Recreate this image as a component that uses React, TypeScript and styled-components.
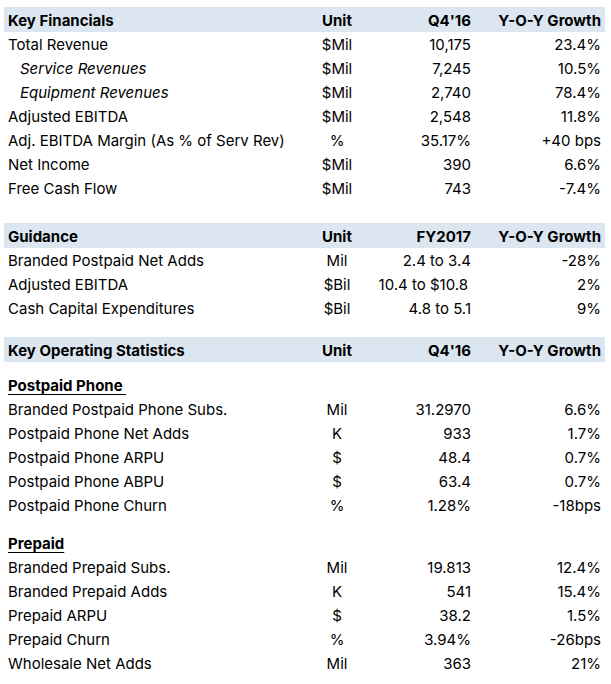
import React from 'react';
import styled, { createGlobalStyle } from 'styled-components';

type Line = {
	label: string;
	unit: string;
	value: string;
	growth: string;
	italic?: boolean;
	valueInset?: number;
};

type Group = { title?: string; lines: Line[] };

type Section = {
	title: string;
	period: string;
	gapBefore: number;
	groups: Group[];
};

const sections: Section[] = [
	{
		title: 'Key Financials',
		period: "Q4'16",
		gapBefore: 7,
		groups: [
			{
				lines: [
					{ label: 'Total Revenue', unit: '$Mil', value: '10,175', growth: '23.4%' },
					{ label: 'Service Revenues', unit: '$Mil', value: '7,245', growth: '10.5%', italic: true },
					{ label: 'Equipment Revenues', unit: '$Mil', value: '2,740', growth: '78.4%', italic: true },
					{ label: 'Adjusted EBITDA', unit: '$Mil', value: '2,548', growth: '11.8%' },
					{ label: 'Adj. EBITDA Margin (As % of Serv Rev)', unit: '%', value: '35.17%', growth: '+40 bps' },
					{ label: 'Net Income', unit: '$Mil', value: '390', growth: '6.6%' },
					{ label: 'Free Cash Flow', unit: '$Mil', value: '743', growth: '-7.4%' },
				],
			},
		],
	},
	{
		title: 'Guidance',
		period: 'FY2017',
		gapBefore: 23,
		groups: [
			{
				lines: [
					{ label: 'Branded Postpaid Net Adds', unit: 'Mil', value: '2.4 to 3.4', growth: '-28%' },
					{ label: 'Adjusted EBITDA', unit: '$Bil', value: '10.4 to $10.8', growth: '2%', valueInset: 3 },
					{ label: 'Cash Capital Expenditures', unit: '$Bil', value: '4.8 to 5.1', growth: '9%' },
				],
			},
		],
	},
	{
		title: 'Key Operating Statistics',
		period: "Q4'16",
		gapBefore: 17,
		groups: [
			{
				title: 'Postpaid Phone ',
				lines: [
					{ label: 'Branded Postpaid Phone Subs.', unit: 'Mil', value: '31.2970', growth: '6.6%' },
					{ label: 'Postpaid Phone Net Adds', unit: 'K', value: '933', growth: '1.7%' },
					{ label: 'Postpaid Phone ARPU', unit: '$', value: '48.4', growth: '0.7%' },
					{ label: 'Postpaid Phone ABPU', unit: '$', value: '63.4', growth: '0.7%' },
					{ label: 'Postpaid Phone Churn', unit: '%', value: '1.28%', growth: '-18bps' },
				],
			},
			{
				title: 'Prepaid',
				lines: [
					{ label: 'Branded Prepaid Subs.', unit: 'Mil', value: '19.813', growth: '12.4%' },
					{ label: 'Branded Prepaid Adds', unit: 'K', value: '541', growth: '15.4%' },
					{ label: 'Prepaid ARPU', unit: '$', value: '38.2', growth: '1.5%' },
					{ label: 'Prepaid Churn', unit: '%', value: '3.94%', growth: '-26bps' },
					{ label: 'Wholesale Net Adds', unit: 'Mil', value: '363', growth: '21%' },
				],
			},
		],
	},
];

const GlobalStyle = createGlobalStyle`
	body {
		margin: 0;
		background: #ffffff;
		font-family: Inter, 'Noto Sans', sans-serif;
		font-size: 15px;
		color: #000000;
	}
`;

const Sheet = styled.div`
	display: flex;
	flex-direction: column;
	width: 601px;
	padding-left: 4px;
`;

const Block = styled.section<{ $gap: number }>`
	display: flex;
	flex-direction: column;
	margin-top: ${(p) => p.$gap}px;
`;

/* hauteur fixe, texte descendu d'un pixel comme dans la feuille */
const Row = styled.div`
	display: grid;
	grid-template-columns: 301px 64px 106px 130px;
	height: 24px;
	line-height: 26px;
	white-space: pre;
`;

const HeadRow = styled(Row)`
	height: 25px;
	line-height: 28px;
	background: #dce6f1;
	font-weight: 700;
`;

const GroupTitleRow = styled(Row)<{ $gap: number }>`
	margin-top: ${(p) => p.$gap}px;
	font-weight: 700;
`;

const Label = styled.div<{ $italic?: boolean }>`
	padding-left: ${(p) => (p.$italic ? 16 : 4)}px;
	font-style: ${(p) => (p.$italic ? 'italic' : 'normal')};
`;

const Underlined = styled.span`
	text-decoration: underline;
	text-decoration-thickness: 1px;
	text-underline-offset: 3px;
`;

const Unit = styled.div`
	text-align: center;
`;

const Num = styled.div<{ $inset?: number }>`
	text-align: right;
	padding-right: ${(p) => 4 + (p.$inset ?? 0)}px;
`;

const groupGap = (i: number) => (i === 0 ? 11 : 14);

export default function App() {
	return (
		<>
			<GlobalStyle />
			<Sheet>
				{sections.map((s) => (
					<Block key={s.title} $gap={s.gapBefore}>
						<HeadRow>
							<Label>{s.title}</Label>
							<Unit>Unit</Unit>
							<Num>{s.period}</Num>
							<Num>Y-O-Y Growth</Num>
						</HeadRow>
						{s.groups.map((g, gi) => (
							<React.Fragment key={gi}>
								{g.title && (
									<GroupTitleRow $gap={groupGap(gi)}>
										<Label>
											<Underlined>{g.title}</Underlined>
										</Label>
									</GroupTitleRow>
								)}
								{g.lines.map((l) => (
									<Row key={l.label}>
										<Label $italic={l.italic}>{l.label}</Label>
										<Unit>{l.unit}</Unit>
										<Num $inset={l.valueInset}>{l.value}</Num>
										<Num>{l.growth}</Num>
									</Row>
								))}
							</React.Fragment>
						))}
					</Block>
				))}
			</Sheet>
		</>
	);
}
